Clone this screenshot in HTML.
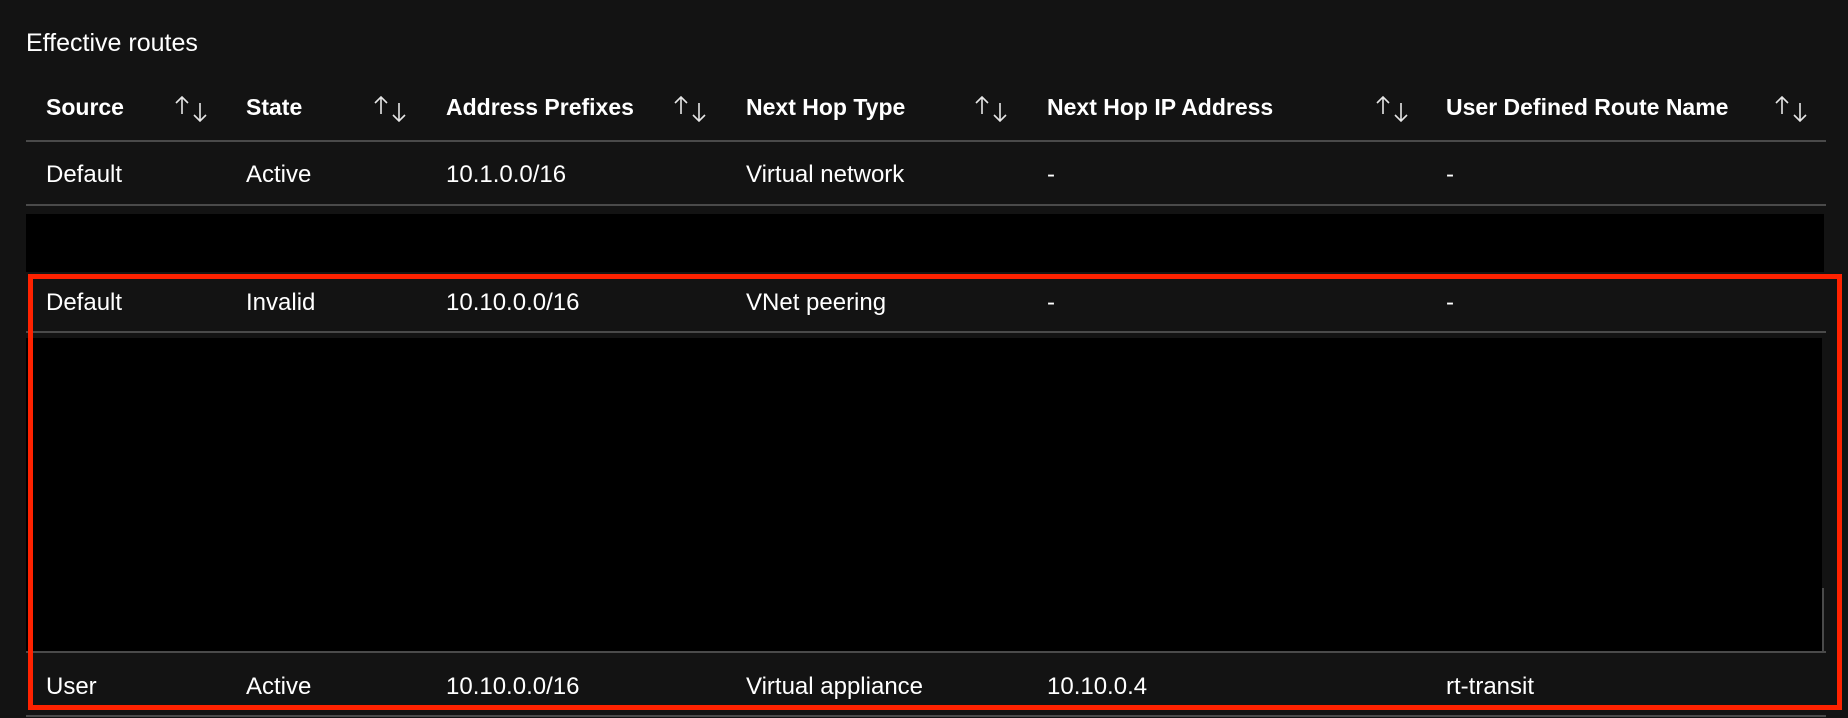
<!DOCTYPE html>
<html><head><meta charset="utf-8"><style>
*{margin:0;padding:0;box-sizing:border-box}
body{width:1848px;height:718px;background:#131313;position:relative;overflow:hidden;font-family:"Liberation Sans",sans-serif;color:#fff}
.t{position:absolute;white-space:nowrap;font-size:24px;line-height:30px}
.h{font-weight:bold;font-size:23px}
.a{position:absolute;top:96px;width:34px;height:26px}
.ln{position:absolute;left:26px;width:1800px;height:2px;background:#4a4a4a}
.blk{position:absolute;background:#000}
.red{position:absolute;border:5px solid #ff2200}
</style></head><body>
<svg width="0" height="0" style="position:absolute"><defs><g id="ar" fill="none" stroke="#e6e6e6" stroke-width="1.6"><path d="M7 1V18M1 7L7 1L13 7"/><path d="M25 7V25M19 19L25 25L31 19"/></g></defs></svg>
<div class="t" style="left:26px;top:28px;font-size:25px">Effective routes</div>

<div class="t h" style="left:46px;top:92px">Source</div>
<svg class="a" style="left:175px"><use href="#ar"/></svg>
<div class="t h" style="left:246px;top:92px">State</div>
<svg class="a" style="left:374px"><use href="#ar"/></svg>
<div class="t h" style="left:446px;top:92px">Address Prefixes</div>
<svg class="a" style="left:674px"><use href="#ar"/></svg>
<div class="t h" style="left:746px;top:92px">Next Hop Type</div>
<svg class="a" style="left:975px"><use href="#ar"/></svg>
<div class="t h" style="left:1047px;top:92px">Next Hop IP Address</div>
<svg class="a" style="left:1376px"><use href="#ar"/></svg>
<div class="t h" style="left:1446px;top:92px">User Defined Route Name</div>
<svg class="a" style="left:1775px"><use href="#ar"/></svg>
<div class="ln" style="top:140px"></div>

<div class="t" style="left:46px;top:160px">Default</div>
<div class="t" style="left:246px;top:160px">Active</div>
<div class="t" style="left:446px;top:160px">10.1.0.0/16</div>
<div class="t" style="left:746px;top:160px">Virtual network</div>
<div class="t" style="left:1047px;top:160px">-</div>
<div class="t" style="left:1446px;top:160px">-</div>
<div class="ln" style="top:204px"></div>

<div class="blk" style="left:26px;top:214px;width:1798px;height:58px"></div>

<div class="t" style="left:46px;top:288px">Default</div>
<div class="t" style="left:246px;top:288px">Invalid</div>
<div class="t" style="left:446px;top:288px">10.10.0.0/16</div>
<div class="t" style="left:746px;top:288px">VNet peering</div>
<div class="t" style="left:1047px;top:288px">-</div>
<div class="t" style="left:1446px;top:288px">-</div>
<div class="ln" style="top:331px"></div>

<div class="blk" style="left:26px;top:338px;width:1796px;height:314px"></div>
<div style="position:absolute;left:1822px;top:588px;width:2px;height:64px;background:#4a4a4a"></div>
<div class="ln" style="top:651px"></div>

<div class="t" style="left:46px;top:672px">User</div>
<div class="t" style="left:246px;top:672px">Active</div>
<div class="t" style="left:446px;top:672px">10.10.0.0/16</div>
<div class="t" style="left:746px;top:672px">Virtual appliance</div>
<div class="t" style="left:1047px;top:672px">10.10.0.4</div>
<div class="t" style="left:1446px;top:672px">rt-transit</div>
<div class="ln" style="top:715px"></div>

<div class="red" style="left:28px;top:274px;width:1814px;height:436px"></div>
</body></html>
